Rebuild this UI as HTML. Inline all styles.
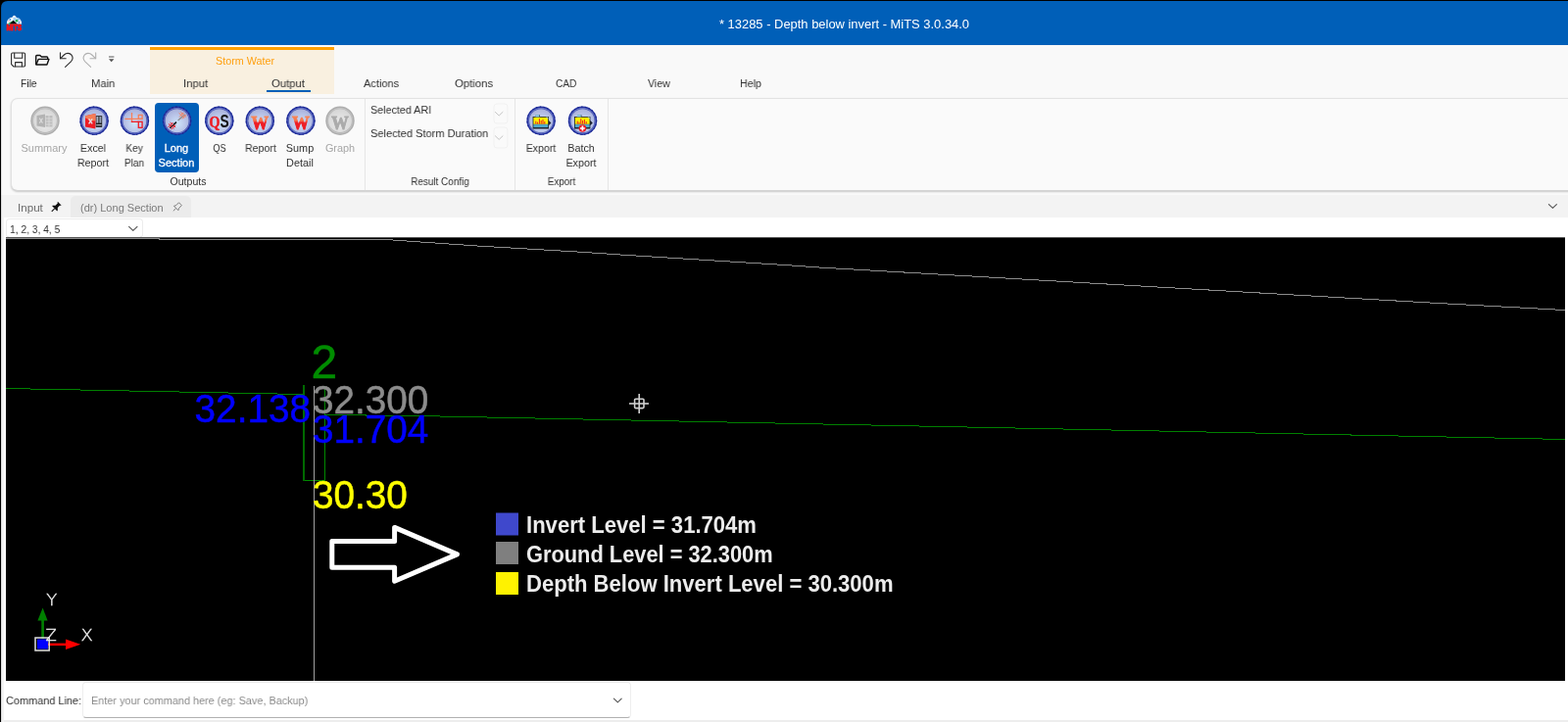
<!DOCTYPE html>
<html lang="en">
<head>
<meta charset="utf-8">
<title>* 13285 - Depth below invert - MiTS 3.0.34.0</title>
<style>
html,body{margin:0;padding:0;}
body{width:1600px;height:737px;overflow:hidden;background:#f6f6f6;font-family:"Liberation Sans",sans-serif;font-size:11.7px;color:#1a1a1a;}
#app{position:relative;width:1600px;height:737px;overflow:hidden;background:#f9f9f9;}
.abs{position:absolute;}
.t{position:absolute;white-space:nowrap;line-height:16px;height:16px;color:#303030;transform:scaleX(var(--s,1));transform-origin:0 50%;will-change:transform;}
.c{text-align:center;}
#titlebar{left:0;top:0;width:1600px;height:46px;background:#005fb8;}
#title{left:734px;top:16.8px;color:#fff;font-size:12.8px;--s:1.01;}
#ctx{left:153.3px;top:48px;width:187.7px;height:48.3px;background:#f9f0e0;}
#ctxbar{left:153.3px;top:48px;width:187.7px;height:3px;background:#ffa000;}
#ribbon{left:10.6px;top:100px;width:1610px;height:93.4px;border:1px solid #e2e2e2;border-bottom-color:#d4d4d4;border-radius:7px;background:#fafafa;box-shadow:0 1px 2px rgba(0,0,0,.2);box-sizing:content-box;}
.sep{position:absolute;width:1px;top:101px;height:93px;background:#e6e6e6;}
.lbl{position:absolute;white-space:nowrap;font-size:10.8px;line-height:15px;text-align:center;color:#303030;width:80px;transform:scaleX(var(--s,1));transform-origin:50% 50%;will-change:transform;}
.grp{font-size:10px;}
.dis{color:#a6a6a6;}
#tabbar{left:4px;top:199px;width:1596px;height:23px;background:#f3f3f3;}
#tab2{left:72px;top:200px;width:123px;height:22px;background:#ebebeb;border-radius:5px 5px 0 0;}
#strip{left:4px;top:222px;width:1596px;height:513px;background:#fff;}
#combo{left:6px;top:223px;width:138px;height:18px;background:#fff;border:1px solid #ececec;border-bottom-color:#bdbdbd;border-radius:4px;}
#canvas{left:6px;top:242px;width:1591px;height:453px;background:#000;overflow:hidden;border-top:1px solid #555;box-sizing:border-box;}
#cmd{left:4px;top:695px;width:1596px;height:40px;background:#fff;}
#cmdbox{left:84px;top:696px;width:558px;height:35px;background:#fff;border:1px solid #eeeeee;border-bottom-color:#b0b0b0;border-radius:4px;}
#status{left:4px;top:735px;width:1596px;height:2px;background:#ededed;}
.cv{position:absolute;white-space:nowrap;font-family:"Liberation Sans",sans-serif;font-size:40px;line-height:40px;}
.lg{position:absolute;white-space:nowrap;font-family:"Liberation Sans",sans-serif;font-weight:bold;font-size:21px;line-height:24px;color:#f2f2f2;}
</style>
</head>
<body>
<div id="app">
  <div id="titlebar" class="abs"></div>
  <div id="title" class="t">* 13285 - Depth below invert - MiTS 3.0.34.0</div>

  <div id="ctx" class="abs"></div>
  <div id="ctxbar" class="abs"></div>
  <div class="t" style="left:220px;top:54.4px;font-size:10.8px;color:#ffa010;--s:1.0;">Storm Water</div>

  <div class="t" id="m-file" style="left:21px;top:77px;--s:0.882;">File</div>
  <div class="t" id="m-main" style="left:93px;top:77px;--s:0.964;">Main</div>
  <div class="t" id="m-input" style="left:186.5px;top:77px;--s:0.968;">Input</div>
  <div class="t" id="m-output" style="left:277px;top:77px;--s:0.970;">Output</div>
  <div class="abs" style="left:272px;top:92px;width:45px;height:2px;background:#005fb8;"></div>
  <div class="t" id="m-actions" style="left:371px;top:77px;--s:0.941;">Actions</div>
  <div class="t" id="m-options" style="left:463.5px;top:77px;--s:0.969;">Options</div>
  <div class="t" id="m-cad" style="left:566.5px;top:77px;--s:0.862;">CAD</div>
  <div class="t" id="m-view" style="left:660.5px;top:77px;--s:0.903;">View</div>
  <div class="t" id="m-help" style="left:754.5px;top:77px;--s:0.913;">Help</div>

  <div id="ribbon" class="abs"></div>
  <div class="sep" style="left:372px;"></div>
  <div class="sep" style="left:525px;"></div>
  <div class="sep" style="left:620px;"></div>

  <div class="abs" id="selbtn" style="left:158px;top:105px;width:45px;height:71px;background:#005fb8;border-radius:4px;"></div>
  <svg id="icons" class="abs" style="left:0;top:0;" width="1600" height="200" viewBox="0 0 1600 200">
    <defs>
      <radialGradient id="gb" cx="50%" cy="62%" r="60%">
        <stop offset="0" stop-color="#cfe6fb"/>
        <stop offset="0.55" stop-color="#bcc8ea"/>
        <stop offset="1" stop-color="#aab2dc"/>
      </radialGradient>
      <radialGradient id="gg" cx="50%" cy="60%" r="60%">
        <stop offset="0" stop-color="#ececec"/>
        <stop offset="1" stop-color="#d6d6d6"/>
      </radialGradient>
      <linearGradient id="gw" x1="0" y1="0" x2="0" y2="1">
        <stop offset="0" stop-color="#f9905c"/>
        <stop offset="0.36" stop-color="#f7774e"/>
        <stop offset="0.47" stop-color="#ee1c24"/>
        <stop offset="1" stop-color="#ee1c24"/>
      </linearGradient>
      <g id="disc">
        <circle r="14.7" fill="#2634a2"/>
        <circle r="14.1" fill="none" stroke="#16228c" stroke-width="1.1" stroke-dasharray="1.4 2.4"/>
        <circle r="13.2" fill="#6f7dc8"/>
        <circle r="12.5" fill="#3e4cb0"/>
        <circle r="12" fill="url(#gb)"/>
      </g>
      <g id="discg">
        <circle r="14.7" fill="#adadad"/>
        <circle r="13.2" fill="#c6c6c6"/>
        <circle r="12.5" fill="#b4b4b4"/>
        <circle r="11.9" fill="url(#gg)"/>
      </g>
    </defs>
    <!-- Summary (disabled) -->
    <use href="#discg" x="46" y="123.2"/>
    <path d="M37.5,118 L46,116.4 L46,130 L37.5,128.6 Z" fill="#b3b3b3"/>
    <rect x="46.5" y="118" width="7" height="11.4" fill="#bdbdbd"/>
    <path d="M46.5,121 h7 M46.5,124 h7 M46.5,127 h7 M50,118 v11" stroke="#dedede" stroke-width="0.8" fill="none"/>
    <path d="M40.3,120.6 l3.2,5 M43.5,120.6 l-3.2,5" stroke="#dcdcdc" stroke-width="1.1"/>
    <!-- Excel Report -->
    <use href="#disc" x="96.1" y="123.2"/>
    <rect x="97.6" y="118.2" width="6.6" height="11.6" fill="#1c1c1c"/>
    <rect x="98.4" y="119" width="2" height="6.6" fill="#aab4c6"/>
    <rect x="101.4" y="119" width="2" height="6.6" fill="#98a2b6"/>
    <rect x="98.2" y="127.2" width="5.4" height="1" fill="#cfd6e2"/>
    <path d="M87,118.2 L97.4,116 L97.4,131.6 L87,129.6 Z" fill="#ee1c24"/>
    <path d="M87,118.2 L97.4,116 L97.4,123.6 L92.4,123.2 L87,120.2 Z" fill="#f57e58"/>
    <path d="M90.6,121.4 l3.6,5 M94.2,121.4 l-3.6,5" stroke="#e6dfe6" stroke-width="1.4"/>
    <!-- Key Plan -->
    <use href="#disc" x="137.4" y="123.2"/>
    <g fill="none" stroke-width="1.3">
      <path d="M127.4,121.4 H145.4" stroke="#f77f5a"/>
      <path d="M134.5,115 V124.4" stroke="#f77f5a"/>
      <path d="M133.8,124.3 H141.5" stroke="#ee1c24"/>
      <rect x="141.3" y="117.4" width="3.8" height="4" stroke="#f77f5a"/>
      <rect x="141.3" y="124.3" width="3.8" height="6" stroke="#ee1c24"/>
    </g>
    <!-- Long Section (selected) -->
    <use href="#disc" x="180.6" y="123.2"/>
    <path d="M173.4,130.8 L180,124.6" stroke="#111" stroke-width="1.5" fill="none"/>
    <path d="M181.6,123 L188.6,116.8" stroke="#8a8a8a" stroke-width="1.3" fill="none"/>
    <path d="M172,126.4 l5.6,5 M173.6,125 l5.6,5 M171.6,130 l5,-5 M174.6,132.2 l4.6,-4.6" stroke="#ee1c24" stroke-width="1" fill="none"/>
    <path d="M182.6,115.4 l5.6,5 M184.4,114.4 l5.4,5 M183,119.4 l4.6,-4.6 M186,121.4 l4,-4.2" stroke="#f77f5a" stroke-width="1" fill="none"/>
    <!-- QS -->
    <use href="#disc" x="223.8" y="123.2"/>
    <text x="213.4" y="130" font-family="'Liberation Serif', serif" font-weight="bold" font-size="16.5" fill="#ee1c24" stroke="#ee1c24" stroke-width="0.5" textLength="11" lengthAdjust="spacingAndGlyphs">Q</text>
    <text x="224.6" y="130" font-family="'Liberation Sans', sans-serif" font-weight="bold" font-size="17.5" fill="#151515" textLength="9.2" lengthAdjust="spacingAndGlyphs">S</text>
    <!-- Report -->
    <use href="#disc" x="265.3" y="123.2"/>
    <text x="256.6" y="131.8" font-family="'Liberation Serif', serif" font-weight="bold" font-size="18" fill="url(#gw)" stroke="url(#gw)" stroke-width="0.9" textLength="17.4" lengthAdjust="spacingAndGlyphs">W</text>
    <!-- Sump Detail -->
    <use href="#disc" x="306.9" y="123.2"/>
    <text x="298.2" y="131.8" font-family="'Liberation Serif', serif" font-weight="bold" font-size="18" fill="url(#gw)" stroke="url(#gw)" stroke-width="0.9" textLength="17.4" lengthAdjust="spacingAndGlyphs">W</text>
    <!-- Graph (disabled) -->
    <use href="#discg" x="347" y="123.2"/>
    <text x="338.3" y="131.8" font-family="'Liberation Serif', serif" font-weight="bold" font-size="18" fill="#ababab" stroke="#ababab" stroke-width="0.9" textLength="17.4" lengthAdjust="spacingAndGlyphs">W</text>
    <!-- Export -->
    <g id="expico">
      <use href="#disc" x="552.1" y="123.2"/>
      <path d="M543.6,119 h3 v-1.8 h4.4 v1.8 h9 v4 l2.4,2.6 l-2.4,2.4 v3.4 h-16.4 Z" fill="#1d2430"/>
      <rect x="546.4" y="117.2" width="4" height="2.2" fill="#8fd0f0"/>
      <rect x="544.4" y="119.8" width="14.8" height="7" fill="#fff200"/>
      <rect x="544.4" y="126.8" width="14.8" height="3.2" fill="#4ea6c8"/>
      <path d="M546.8,126.6 v-3 M548.6,126.6 v-2 M550.4,126.6 v-5.4 M552.2,126.6 v-3.6 M554,126.6 v-4.6 M555.8,126.6 v-2.6" stroke="#ee1c24" stroke-width="1" fill="none"/>
      <path d="M557.2,119.6 h2 v2 Z" fill="#9fd4f0"/>
    </g>
    <!-- Batch Export -->
    <use href="#expico" x="42.4" y="0"/>
    <circle cx="594.4" cy="131" r="3.8" fill="#ee1c24"/>
    <path d="M592,131 h4.8 M594.4,128.6 v4.8" stroke="#fff" stroke-width="1.7" fill="none"/>
    <!-- dropdown chevrons -->
    <g fill="none" stroke="#c4c4c4" stroke-width="1" stroke-linecap="round" stroke-linejoin="round">
      <path d="M505.4,114.4 l3.8,3.6 l3.8,-3.6"/>
      <path d="M505.4,138.8 l3.8,3.6 l3.8,-3.6"/>
      <rect x="504" y="106" width="14" height="20" rx="3" stroke="#f1f1f1"/>
      <rect x="504" y="130" width="14" height="21" rx="3" stroke="#f1f1f1"/>
    </g>
  </svg>
  <div class="lbl dis" style="left:5.4px;top:144.4px;--s:1.016;">Summary</div>
  <div class="lbl" style="left:55px;top:144.4px;--s:0.984;">Excel<br>Report</div>
  <div class="lbl" style="left:96.5px;top:144.4px;--s:0.933;">Key<br>Plan</div>
  <div class="lbl" style="left:139.5px;top:144.4px;color:#fff;-webkit-text-stroke:0.3px #fff;--s:1.02;">Long<br>Section</div>
  <div class="lbl" style="left:183.6px;top:144.4px;--s:0.867;">QS</div>
  <div class="lbl" style="left:225.5px;top:144.4px;--s:0.978;">Report</div>
  <div class="lbl" style="left:266.3px;top:144.4px;--s:1.007;">Sump<br>Detail</div>
  <div class="lbl dis" style="left:306.5px;top:144.4px;--s:1.007;">Graph</div>
  <div class="lbl" style="left:512px;top:144.4px;--s:0.977;">Export</div>
  <div class="lbl" style="left:553.2px;top:144.4px;--s:0.992;">Batch<br>Export</div>
  <div class="lbl grp" style="left:152px;top:177.6px;--s:1.056;">Outputs</div>
  <div class="lbl grp" style="left:409.2px;top:177.6px;--s:0.990;">Result Config</div>
  <div class="lbl grp" style="left:533.4px;top:177.6px;--s:0.971;">Export</div>
  <div class="t" style="left:378px;top:104px;--s:0.919;">Selected ARI</div>
  <div class="t" style="left:378px;top:128px;--s:0.945;">Selected Storm Duration</div>

  <div class="abs" style="left:1px;top:199px;width:3px;height:538px;background:#f3f3f3;"></div>
  <div id="tabbar" class="abs"></div>
  <div id="tab2" class="abs"></div>
  <div class="t" style="left:17.6px;top:204px;font-size:10.8px;color:#6a6a6a;--s:1.075;">Input</div>
  <div class="t" style="left:82px;top:204px;font-size:10.8px;color:#7a7a7a;--s:1.022;">(dr) Long Section</div>
  <div id="strip" class="abs"></div>
  <div id="combo" class="abs"></div>
  <div class="t" style="left:10px;top:225.5px;--s:0.877;">1, 2, 3, 4, 5</div>

  <div id="canvas" class="abs"></div>

  <svg id="cad" class="abs" style="left:0;top:0;" width="1600" height="737" viewBox="0 0 1600 737">
    <g shape-rendering="crispEdges" fill="none" stroke-width="1">
      <polyline points="6,243.5 162.5,243.5 163,244.5 400.5,244.5 401,245.05 488,251.05 590,257.05 634,260.05 794,270.05 837,273.05 1150,291.2 1460,309.05 1588,316.05 1597,316.5" stroke="#8c8c8c"/>
      <polyline points="6,396.5 32,397.02 284,402.02 310,402.5" stroke="#008000"/>
      <polyline points="331.5,394 331.5,490.5 309,490.5" stroke="#008a00"/>
      <rect x="309" y="393" width="2" height="98" fill="#006a00" stroke="none"/>
      <polyline points="331,423.5 373.5,423.5 374,424.5 448.5,424.5 449,425.02 1526,447.02 1597,448.47" stroke="#008000"/>
      <line x1="320.5" y1="394" x2="320.5" y2="695" stroke="#a0a0a0"/>
    </g>
    <g font-family="'Liberation Sans', sans-serif" font-size="40.4" stroke-width="0.5" stroke-linejoin="round">
      <text id="n2" x="317.6" y="385.6" font-size="48" fill="#008c00" stroke="#008c00">2</text>
      <text id="n138" transform="translate(198.6,431.3) scale(0.958,1)" fill="#0000ff" stroke="#0000ff">32.138</text>
      <text id="n300" transform="translate(319,422.4) scale(0.958,1)" fill="#8c8c8c" stroke="#8c8c8c">32.300</text>
      <text id="n704" transform="translate(319,451.7) scale(0.958,1)" fill="#0000ff" stroke="#0000ff">31.704</text>
      <text id="n30" transform="translate(319,518.6) scale(0.958,1)" fill="#ffff00" stroke="#ffff00">30.30</text>
    </g>
    <g fill="none" stroke="#d0d0d0" stroke-width="1.6">
      <line x1="642" y1="412" x2="662" y2="412"/>
      <line x1="652.2" y1="402" x2="652.2" y2="422"/>
      <rect x="647.6" y="407.2" width="9.4" height="9.4" rx="1"/>
    </g>
    <path d="M338.8,552.5 L402.6,552.5 L402.6,538.4 L466.4,565.9 L402.6,593.2 L402.6,579.3 L338.8,579.3 Z" fill="none" stroke="#ffffff" stroke-width="5" stroke-linejoin="round"/>
    <rect x="506" y="523.5" width="23" height="23" fill="#3f48cc"/>
    <rect x="506" y="553" width="23" height="23" fill="#7f7f7f"/>
    <rect x="506" y="584" width="23" height="23" fill="#fff200"/>
    <g font-family="'Liberation Sans', sans-serif" font-weight="bold" font-size="23.5" fill="#ececec">
      <text id="l1" x="537" y="543.8" textLength="235" lengthAdjust="spacingAndGlyphs">Invert Level = 31.704m</text>
      <text id="l2" x="537" y="573.6" textLength="251.6" lengthAdjust="spacingAndGlyphs">Ground Level = 32.300m</text>
      <text id="l3" x="537" y="604.2" textLength="374.5" lengthAdjust="spacingAndGlyphs">Depth Below Invert Level = 30.300m</text>
    </g>
    <g>
      <rect x="42.3" y="632" width="2.6" height="20" fill="#008000"/>
      <polygon points="43.6,620.5 48.6,633.5 38.4,633.5" fill="#008000"/>
      <rect x="49" y="656.6" width="19" height="2.4" fill="#ff0000"/>
      <polygon points="67,652.6 82.2,657.8 67,663" fill="#ff0000"/>
      <rect x="38" y="652.5" width="11" height="10" fill="#0000ff"/>
      <rect x="36" y="651" width="14.2" height="13" fill="none" stroke="#e0e0e0" stroke-width="1.5"/>
    </g>
    <g font-family="'DejaVu Sans', sans-serif" font-weight="200" font-size="15" fill="#ededed" stroke="#ededed" stroke-width="0.35">
      <text id="ay" transform="translate(47.2,617.9) scale(1.2,1)">Y</text>
      <text id="az" transform="translate(46.4,654) scale(1.1,1)">Z</text>
      <text id="ax" transform="translate(82.6,654) scale(1.2,1)">X</text>
    </g>
  </svg>
  <div id="cmd" class="abs"></div>
  <div id="cmdbox" class="abs"></div>
  <div class="t" style="left:6px;top:707px;--s:0.933;">Command Line:</div>
  <div class="t" style="left:93px;top:707px;color:#8a8a8a;--s:0.931;">Enter your command here (eg: Save, Backup)</div>
  <div id="status" class="abs"></div>
  <svg id="chrome" class="abs" style="left:0;top:0;pointer-events:none;" width="1600" height="737" viewBox="0 0 1600 737">
    <!-- app logo -->
    <g id="logo">
      <path d="M6.9,24.4 C7,20 9.4,18 12,18 L13.4,16.2 L15.8,16.2 L17,18 C20,18.2 22,20.4 22.2,24.4 Z" fill="#dcebf8"/>
      <circle cx="9.2" cy="21.6" r="1.7" fill="#f7d3df"/>
      <circle cx="8.4" cy="23.2" r="1.2" fill="#ffffff"/>
      <circle cx="11.6" cy="19.4" r="1.6" fill="#ffffff"/>
      <circle cx="10.4" cy="19.8" r="0.9" fill="#2a8be0"/>
      <circle cx="14.5" cy="16.6" r="0.9" fill="#ffffff"/>
      <circle cx="15" cy="19.4" r="1.5" fill="#9fd2f4"/>
      <circle cx="18.6" cy="19.8" r="1.3" fill="#8cc8ee"/>
      <circle cx="17" cy="21.2" r="1.3" fill="#22b14c"/>
      <circle cx="20.4" cy="22.8" r="1.5" fill="#e4f1fb"/>
      <circle cx="19.4" cy="22.8" r="0.7" fill="#1f7fd6"/>
      <path d="M7.2,24.6 L12.6,21.4 L13.4,24.6 Z" fill="#22b14c"/>
      <path d="M9.8,24.6 L13.6,20.8 L17.6,24.6 Z" fill="#000"/>
      <text x="6.4" y="30.9" font-family="'Liberation Sans', sans-serif" font-weight="bold" font-size="9.8" fill="#ff1010" stroke="#ff1010" stroke-width="0.8" textLength="15.6" lengthAdjust="spacingAndGlyphs">MITS</text>
    </g>
    <!-- quick access toolbar -->
    <g fill="none" stroke="#2c2c2c" stroke-width="1.1" stroke-linejoin="round" stroke-linecap="round">
      <path d="M12.8,54 H24.4 Q25.6,54 25.6,55.2 V66.8 Q25.6,68 24.4,68 H14 L11.6,65.6 V55.2 Q11.6,54 12.8,54 Z"/>
      <path d="M14.7,54.2 V59.3 H22.8 V54.2"/>
      <path d="M15.6,67.8 V63.6 H22.4 V67.8"/>
    </g>
    <g fill="none" stroke="#111" stroke-width="1.4" stroke-linejoin="round" stroke-linecap="round">
      <path d="M36.7,65.4 V57.4 Q36.7,56.5 37.6,56.5 H40.8 L42.4,58 H47.8 Q48.7,58 48.7,58.9 V60.2"/>
      <path d="M36.9,66 L39.2,60.4 H49.9 L47.9,66 Z"/>
    </g>
    <g id="undo" fill="none" stroke="#2c2c2c" stroke-width="1.1" stroke-linecap="round" stroke-linejoin="round">
      <path d="M61.5,53.9 V59.8 H67.2"/>
      <path d="M61.7,59.6 L65.4,56 C67.6,53.8 71.2,53.8 73,56.2 C74.6,58.4 74.2,61 72.4,62.8 L66.6,68.3"/>
    </g>
    <g fill="none" stroke="#b0b0b0" stroke-width="1.1" stroke-linecap="round" stroke-linejoin="round" transform="translate(159.2,0) scale(-1,1)">
      <path d="M61.5,53.9 V59.8 H67.2"/>
      <path d="M61.7,59.6 L65.4,56 C67.6,53.8 71.2,53.8 73,56.2 C74.6,58.4 74.2,61 72.4,62.8 L66.6,68.3"/>
    </g>
    <path d="M111,58 H116.4" stroke="#555" stroke-width="1" fill="none"/>
    <path d="M111,60.2 H116.4 L113.7,63.2 Z" fill="#555"/>
    <!-- tab pins -->
    <g transform="translate(57,211.6) rotate(45)">
      <path d="M-2.4,-5.4 H2.4 V-4.4 H1.6 V-1 L3.6,1 V1.8 H-3.6 V1 L-1.6,-1 V-4.4 H-2.4 Z" fill="#111"/>
      <path d="M0,1.8 V6" stroke="#111" stroke-width="1" fill="none"/>
    </g>
    <g transform="translate(180.6,211.6) rotate(45) scale(0.92)" fill="none" stroke="#7a7a7a" stroke-width="1" stroke-linejoin="round">
      <path d="M-2.2,-5.2 H2.2 V-1 L3.4,1.4 H-3.4 L-2.2,-1 Z"/>
      <path d="M0,1.6 V5.8"/>
    </g>
    <!-- chevrons -->
    <g fill="none" stroke="#555" stroke-width="1.1" stroke-linecap="round" stroke-linejoin="round">
      <path d="M131.6,231.4 L135.8,235.4 L140,231.4"/>
      <path d="M1580.4,208.6 L1584.4,212.4 L1588.4,208.6"/>
      <path d="M626.4,713.2 L630.3,716.8 L634.2,713.2"/>
    </g>
    <!-- window frame -->
    <path d="M0,0 H1600 V1 H8 Q1.1,1 1.1,8 V737 H0 Z" fill="#000"/>
  </svg>
</div>
</body>
</html>
